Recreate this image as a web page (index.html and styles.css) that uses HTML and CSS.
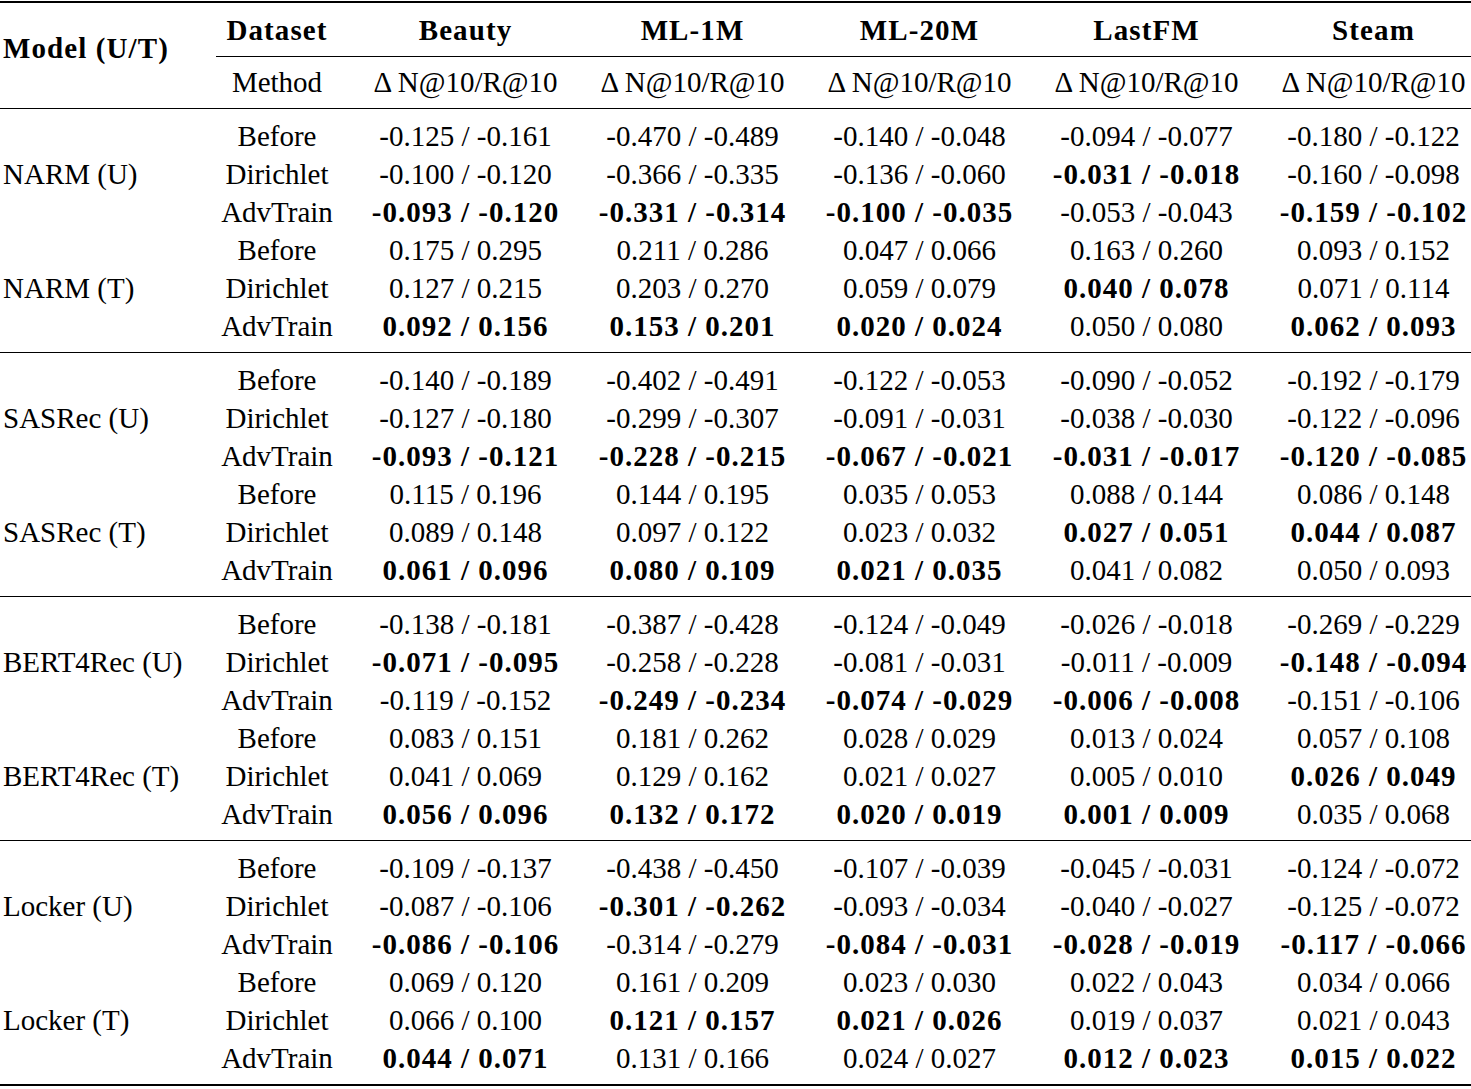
FILE: index.html
```html
<!DOCTYPE html>
<html lang="en">
<head>
<meta charset="utf-8">
<title>Results table</title>
<link rel="stylesheet" href="styles.css">
</head>
<body>
<div class="wrap">
<table class="tbl">
<colgroup>
<col class="c-model"><col class="c-method"><col class="c-data"><col class="c-data"><col class="c-data"><col class="c-data"><col class="c-data">
</colgroup>
<thead>
<tr class="h1">
<th class="hmodel" rowspan="2">Model (U/T)</th>
<th class="hds trim">Dataset</th>
<th class="hds">Beauty</th>
<th class="hds">ML-1M</th>
<th class="hds">ML-20M</th>
<th class="hds">LastFM</th>
<th class="hds">Steam</th>
</tr>
<tr class="h2">
<td>Method</td>
<td>Δ N@10/R@10</td>
<td>Δ N@10/R@10</td>
<td>Δ N@10/R@10</td>
<td>Δ N@10/R@10</td>
<td>Δ N@10/R@10</td>
</tr>
</thead>

<tbody class="g">
<tr class="first"><td class="m"></td><td class="meth">Before</td><td>-0.125 / -0.161</td><td>-0.470 / -0.489</td><td>-0.140 / -0.048</td><td>-0.094 / -0.077</td><td>-0.180 / -0.122</td></tr>
<tr><td class="m">NARM (U)</td><td class="meth">Dirichlet</td><td>-0.100 / -0.120</td><td>-0.366 / -0.335</td><td>-0.136 / -0.060</td><td class="b">-0.031 / -0.018</td><td>-0.160 / -0.098</td></tr>
<tr><td class="m"></td><td class="meth">AdvTrain</td><td class="b">-0.093 / -0.120</td><td class="b">-0.331 / -0.314</td><td class="b">-0.100 / -0.035</td><td>-0.053 / -0.043</td><td class="b">-0.159 / -0.102</td></tr>
<tr><td class="m"></td><td class="meth">Before</td><td>0.175 / 0.295</td><td>0.211 / 0.286</td><td>0.047 / 0.066</td><td>0.163 / 0.260</td><td>0.093 / 0.152</td></tr>
<tr><td class="m">NARM (T)</td><td class="meth">Dirichlet</td><td>0.127 / 0.215</td><td>0.203 / 0.270</td><td>0.059 / 0.079</td><td class="b">0.040 / 0.078</td><td>0.071 / 0.114</td></tr>
<tr class="last"><td class="m"></td><td class="meth">AdvTrain</td><td class="b">0.092 / 0.156</td><td class="b">0.153 / 0.201</td><td class="b">0.020 / 0.024</td><td>0.050 / 0.080</td><td class="b">0.062 / 0.093</td></tr>
</tbody>

<tbody class="g">
<tr class="first"><td class="m"></td><td class="meth">Before</td><td>-0.140 / -0.189</td><td>-0.402 / -0.491</td><td>-0.122 / -0.053</td><td>-0.090 / -0.052</td><td>-0.192 / -0.179</td></tr>
<tr><td class="m">SASRec (U)</td><td class="meth">Dirichlet</td><td>-0.127 / -0.180</td><td>-0.299 / -0.307</td><td>-0.091 / -0.031</td><td>-0.038 / -0.030</td><td>-0.122 / -0.096</td></tr>
<tr><td class="m"></td><td class="meth">AdvTrain</td><td class="b">-0.093 / -0.121</td><td class="b">-0.228 / -0.215</td><td class="b">-0.067 / -0.021</td><td class="b">-0.031 / -0.017</td><td class="b">-0.120 / -0.085</td></tr>
<tr><td class="m"></td><td class="meth">Before</td><td>0.115 / 0.196</td><td>0.144 / 0.195</td><td>0.035 / 0.053</td><td>0.088 / 0.144</td><td>0.086 / 0.148</td></tr>
<tr><td class="m">SASRec (T)</td><td class="meth">Dirichlet</td><td>0.089 / 0.148</td><td>0.097 / 0.122</td><td>0.023 / 0.032</td><td class="b">0.027 / 0.051</td><td class="b">0.044 / 0.087</td></tr>
<tr class="last"><td class="m"></td><td class="meth">AdvTrain</td><td class="b">0.061 / 0.096</td><td class="b">0.080 / 0.109</td><td class="b">0.021 / 0.035</td><td>0.041 / 0.082</td><td>0.050 / 0.093</td></tr>
</tbody>

<tbody class="g">
<tr class="first"><td class="m"></td><td class="meth">Before</td><td>-0.138 / -0.181</td><td>-0.387 / -0.428</td><td>-0.124 / -0.049</td><td>-0.026 / -0.018</td><td>-0.269 / -0.229</td></tr>
<tr><td class="m">BERT4Rec (U)</td><td class="meth">Dirichlet</td><td class="b">-0.071 / -0.095</td><td>-0.258 / -0.228</td><td>-0.081 / -0.031</td><td>-0.011 / -0.009</td><td class="b">-0.148 / -0.094</td></tr>
<tr><td class="m"></td><td class="meth">AdvTrain</td><td>-0.119 / -0.152</td><td class="b">-0.249 / -0.234</td><td class="b">-0.074 / -0.029</td><td class="b">-0.006 / -0.008</td><td>-0.151 / -0.106</td></tr>
<tr><td class="m"></td><td class="meth">Before</td><td>0.083 / 0.151</td><td>0.181 / 0.262</td><td>0.028 / 0.029</td><td>0.013 / 0.024</td><td>0.057 / 0.108</td></tr>
<tr><td class="m">BERT4Rec (T)</td><td class="meth">Dirichlet</td><td>0.041 / 0.069</td><td>0.129 / 0.162</td><td>0.021 / 0.027</td><td>0.005 / 0.010</td><td class="b">0.026 / 0.049</td></tr>
<tr class="last"><td class="m"></td><td class="meth">AdvTrain</td><td class="b">0.056 / 0.096</td><td class="b">0.132 / 0.172</td><td class="b">0.020 / 0.019</td><td class="b">0.001 / 0.009</td><td>0.035 / 0.068</td></tr>
</tbody>

<tbody class="g lastgroup">
<tr class="first"><td class="m"></td><td class="meth">Before</td><td>-0.109 / -0.137</td><td>-0.438 / -0.450</td><td>-0.107 / -0.039</td><td>-0.045 / -0.031</td><td>-0.124 / -0.072</td></tr>
<tr><td class="m">Locker (U)</td><td class="meth">Dirichlet</td><td>-0.087 / -0.106</td><td class="b">-0.301 / -0.262</td><td>-0.093 / -0.034</td><td>-0.040 / -0.027</td><td>-0.125 / -0.072</td></tr>
<tr><td class="m"></td><td class="meth">AdvTrain</td><td class="b">-0.086 / -0.106</td><td>-0.314 / -0.279</td><td class="b">-0.084 / -0.031</td><td class="b">-0.028 / -0.019</td><td class="b">-0.117 / -0.066</td></tr>
<tr><td class="m"></td><td class="meth">Before</td><td>0.069 / 0.120</td><td>0.161 / 0.209</td><td>0.023 / 0.030</td><td>0.022 / 0.043</td><td>0.034 / 0.066</td></tr>
<tr><td class="m">Locker (T)</td><td class="meth">Dirichlet</td><td>0.066 / 0.100</td><td class="b">0.121 / 0.157</td><td class="b">0.021 / 0.026</td><td>0.019 / 0.037</td><td>0.021 / 0.043</td></tr>
<tr class="last"><td class="m"></td><td class="meth">AdvTrain</td><td class="b">0.044 / 0.071</td><td>0.131 / 0.166</td><td>0.024 / 0.027</td><td class="b">0.012 / 0.023</td><td class="b">0.015 / 0.022</td></tr>
</tbody>
</table>
</div>
</body>
</html>
```

FILE: styles.css
```css
html, body {
  margin: 0;
  padding: 0;
  background: #ffffff;
  overflow: hidden;
}

.wrap {
  width: 1471px;
  overflow: hidden;
  margin-top: 1px;
}

.tbl {
  width: 1487px;
  table-layout: fixed;
  border-collapse: separate;
  border-spacing: 0;
  font-family: "Liberation Serif", "Times New Roman", serif;
  font-size: 29px;
  color: #000;
}

.c-model { width: 202px; }
.c-method { width: 150px; }
.c-data { width: 227px; }

.tbl th,
.tbl td {
  padding: 0;
  line-height: 38px;
  height: 38px;
  text-align: center;
  white-space: nowrap;
  vertical-align: top;
  font-weight: normal;
}

/* header */
.h1 th {
  border-top: 2px solid #000;
  padding-top: 8px;
  padding-bottom: 7px;
  font-weight: bold;
  letter-spacing: 1.1px;
}

.h1 .hds {
  border-bottom: 1px solid #000;
}

.h1 .hds.trim {
  border-bottom: 0;
  padding-bottom: 8px;
  background: linear-gradient(#000, #000) no-repeat right bottom / calc(100% - 14px) 1px;
}

.h1 .hmodel {
  text-align: left;
  padding-left: 3px;
  padding-top: 26px;
  border-bottom: 1px solid #000;
}

.h2 td {
  padding-top: 6px;
  padding-bottom: 7px;
  border-bottom: 1px solid #000;
}

/* body */
.tbl td.m {
  text-align: left;
  padding-left: 3px;
}

.tbl td.b {
  font-weight: bold;
  letter-spacing: 1px;
}

.g tr.first td {
  padding-top: 8px;
}

.g tr.last td {
  padding-bottom: 7px;
}

.g + .g tr.first td {
  border-top: 1px solid #000;
}

.lastgroup tr.last td {
  border-bottom: 2px solid #000;
}
```
